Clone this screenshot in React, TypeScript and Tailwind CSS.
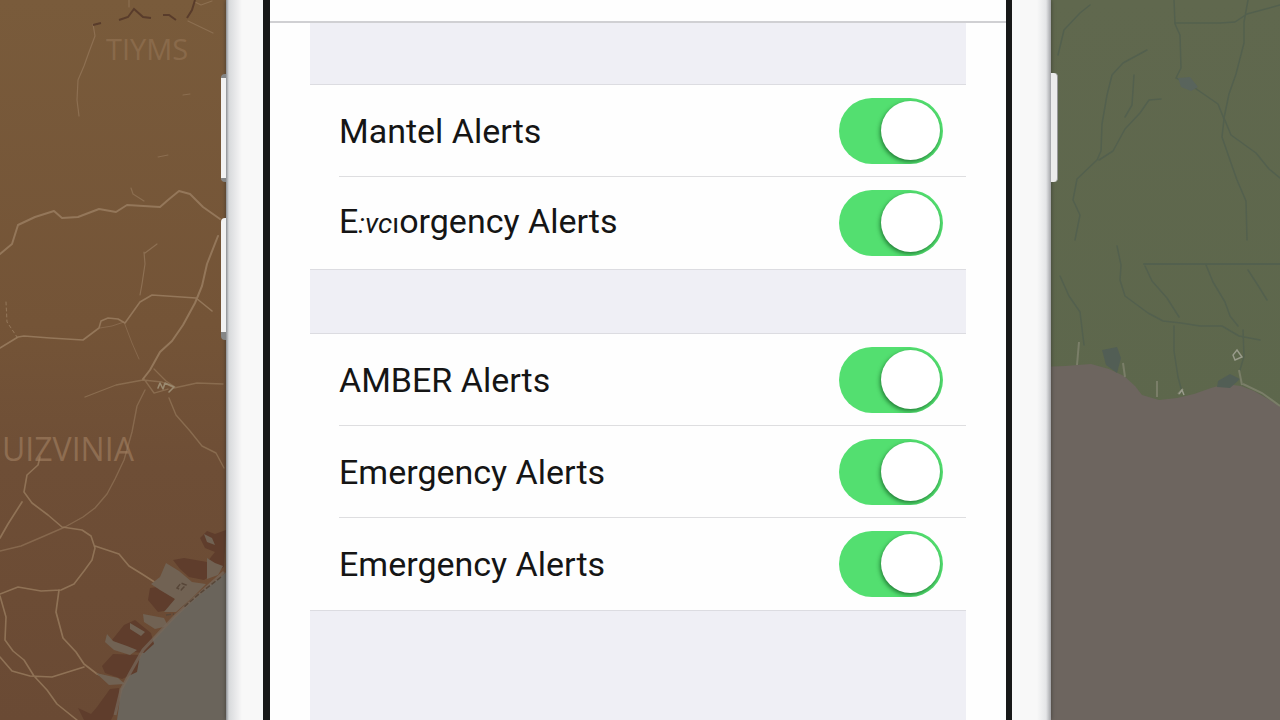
import { type ReactNode } from 'react';

type Alert = { id: string; label: string; text?: ReactNode };

const governmentAlerts: Alert[] = [
  { id: 'mantel', label: 'Mantel Alerts' },
  {
    id: 'emergency-1',
    label: 'E:vcıorgency Alerts',
    text: (
      <>
        E<span className="text-[28px] italic">:vc</span>
        <span className="text-[28px]">ı</span>orgency Alerts
      </>
    ),
  },
];

const publicAlerts: Alert[] = [
  { id: 'amber', label: 'AMBER Alerts' },
  { id: 'emergency-2', label: 'Emergency Alerts' },
  { id: 'emergency-3', label: 'Emergency Alerts' },
];

function MapBackground() {
  return (
    <svg
      className="absolute inset-0 h-full w-full"
      viewBox="0 0 1280 720"
      preserveAspectRatio="xMidYMid slice"
      aria-hidden="true"
    >
      <defs>
        <linearGradient id="land" x1="0" y1="0" x2="0" y2="1">
          <stop offset="0" stopColor="#795b3b" />
          <stop offset="0.45" stopColor="#745437" />
          <stop offset="0.65" stopColor="#6e4e36" />
          <stop offset="1" stopColor="#6a4a34" />
        </linearGradient>
        <linearGradient id="forest" x1="0" y1="0" x2="0" y2="1">
          <stop offset="0" stopColor="#60684e" />
          <stop offset="1" stopColor="#5d674c" />
        </linearGradient>
      </defs>
      <rect width="640" height="720" fill="url(#land)" />
      <rect x="640" width="640" height="420" fill="url(#forest)" />

      {/* western roads */}
      <g fill="none" stroke="#94775a" strokeWidth="1.6" strokeLinejoin="round" strokeLinecap="round">
        <path d="M0 254 L12 244 L18 225 L35 217 L54 211 L62 218 L78 217 L99 209 L116 212 L127 205 L160 207 L168 200 L179 191 L190 194 L203 207 L220 219" strokeWidth="2" />
        <path d="M93 24 L95 36 L89 52 L84 66 L78 80 L77 100 L79 116" strokeWidth="1.2" opacity=".75" />
        <path d="M131 188 L133 194 L144 201 M188 21 L213 33 M129 0 L129 7 M183 95 L190 94 M158 157 L168 155 M195 2 L201 5 L212 1" strokeWidth="1.2" opacity=".7" />
        <path d="M218 236 L207 264 L202 286 L195 303 L183 325 L172 341 L160 352 L150 370 L143 379" strokeWidth="2" />
        <path d="M0 348 L18 337 L24 336 L50 338 L83 340 L99 328 L101 321 L108 318 L118 319 L125 323 L140 302 L152 295 L196 298 L212 311" strokeWidth="1.6" />
        <path d="M100 328 L112 326 L124 322 L132 343 L139 359" strokeWidth="1" opacity=".6" />
        <path d="M144 252 L145 264 L142 284 L140 295 M145 253 L157 244" strokeWidth="1.2" opacity=".8" />
        <path d="M6 302 L7 322 L17 337" strokeWidth="1" strokeDasharray="3 3" />
        <path d="M85 397 L116 385 L143 380 L162 382 L174 388 L197 383 L223 384 M144 379 L154 393 L168 389 M154 369 L166 381 L175 387" strokeWidth="1.3" opacity=".7" />
        <path d="M158 388 L160 383 L163 389 L165 383 L174 387 L169 392" stroke="#9b8a70" strokeWidth="1.6" />
        <path d="M145 390 L137 406 L132 432 L124 460 L115 479 L107 494 L95 508 L83 517 L65 527 L42 537 L21 546 L0 551" strokeWidth="1.4" opacity=".65" />
        <path d="M169 398 L176 415 L190 431 L202 446 L216 453 L224 468" strokeWidth="1.4" opacity=".7" />
        <path d="M40 457 L38 465 L27 475 L24 492 L32 503 L48 515 L62 527 L82 530 L91 536 L95 548 L92 560 L84 571 L74 584 L61 590 L41 591 L18 587 L0 594" strokeWidth="1.6" opacity=".9" />
        <path d="M22 502 L8 524 L0 538 M95 546 L119 554 L129 566 L142 574 L156 583 L174 589" strokeWidth="1.7" opacity=".9" />
        <path d="M59 590 L56 612 L63 638 L76 652 L84 664 L97 674 L113 680" strokeWidth="1.7" opacity=".9" />
        <path d="M0 596 L6 617 L5 640 L13 651 L24 660 L34 676 L47 690 L57 704 L77 720 M0 657 L12 671 L30 676 L52 677 L84 667" strokeWidth="1.6" opacity=".9" />
      </g>
      <path d="M93 25 L101 23 M119 20 L128 17 L134 9 L143 17 L151 18 M163 15 L169 15 L176 20 M187 18 L192 10 L195 0" fill="none" stroke="#593c2b" strokeWidth="2" />
      <g fill="#a48264" fontFamily="Open Sans, sans-serif">
        <text x="106" y="60" fontSize="29" opacity=".4">TIYMS</text>
        <text x="2" y="461" fontSize="32" opacity=".6">UIZVINIA</text>
      </g>

      {/* western coast */}
      <path d="M240 560 L224 574 L207 587 L189 603 L174 617 L158 634 L147 645 L140 657 L129 676 L121 689 L119 706 L117 720 H280 V560Z" fill="#6a645b" />
      <path d="M226 530 L215 534 L207 531 L200 538 L205 548 L215 552 L207 562 L184 558 L173 560 L180 569 L189 577 L204 580 L224 567Z M150 588 L165 586 L175 599 L169 610 L158 612 L148 600Z M112 640 L124 625 L135 620 L151 633 L154 644 L144 653 L124 651Z M102 666 L113 654 L140 655 L137 672 L122 679 L105 673Z M78 708 L91 714 L97 707 L110 689 L119 688 L119 704 L111 720 H84Z" fill="#5f3d2c" />
      <path d="M166 563 L179 571 L192 582 L206 584 L192 598 L176 612 L164 612 L175 599 L160 590 L151 584 L160 577Z M107 634 L113 641 L127 646 L137 650 L130 655 L114 650 L105 642Z M130 623 L145 632 L141 636 L130 629Z M143 614 L164 618 L168 626 L155 629 L144 622Z M96 673 L118 678 L125 684 L109 685Z M204 534 L212 538 L215 545 L207 542Z M207 558 L215 563 L223 566 L218 575 L207 579Z" fill="#716253" />
      <path d="M224 572 L207 587 L189 603 L174 617 L158 634 L143 650 L130 673 L121 690 L115 715" fill="none" stroke="#75675a" strokeWidth="3" opacity=".75" />
      <path d="M221 577 L199 594 L184 607 M177 588 L181 583 L186 585 L181 590Z M166 615 L174 614" fill="none" stroke="#574638" strokeWidth="1.5" strokeDasharray="5 2" />

      {/* eastern waterways */}
      <g fill="none" stroke="#53604e" strokeWidth="1.5" strokeLinejoin="round" strokeLinecap="round">
        <path d="M1174 0 L1175 24 L1180 35 L1181 68 L1176 78 L1189 84 L1205 95 L1218 104 L1224 119 L1222 137 L1231 163 L1237 180 L1246 201 L1247 240" />
        <path d="M1175 23 H1220 L1235 22 L1247 14 L1280 5 M1248 0 L1244 22 L1244 43 L1236 74 L1229 94 L1224 118 L1231 135 L1256 153 L1269 169 L1280 178" />
        <path d="M1147 50 L1123 63 L1112 75 L1107 95 L1102 124 L1101 151 L1097 160 L1077 179 L1073 200 L1080 215 L1075 240" />
        <path d="M1134 75 L1132 105 L1125 117 M1161 99 L1149 100 L1140 113 L1125 129 L1113 151 L1099 160" />
        <path d="M1090 5 L1080 13 L1064 30 L1058 55 M1117 246 L1121 265 L1120 280 L1125 296 L1148 313 L1163 321 L1181 323 L1200 326 L1222 326 L1239 336 L1260 340" />
        <path d="M1144 264 H1280" strokeWidth="2" />
        <path d="M1145 266 L1152 281 L1167 298 L1179 317 M1206 265 L1213 282 L1225 302 L1230 316 L1238 326 M1248 270 L1259 287 L1267 300" />
        <path d="M1060 276 L1069 296 L1080 312 L1084 345 M1174 326 L1174 351 L1178 377 L1182 392 M1243 330 L1244 356 L1240 370" />
      </g>
      <path d="M1178 78 L1190 77 L1198 87 L1191 91 L1181 87Z" fill="#59645c" />
      <path d="M1040 367 L1065 366 L1091 364 L1109 369 L1124 376 L1135 386 L1142 395 L1159 400 L1177 398 L1194 394 L1211 388 L1225 384 L1241 386 L1254 391 L1268 399 L1280 406 V720 H1040Z" fill="#6d655f" />
      <path d="M1102 350 L1117 347 L1121 358 L1117 373 L1106 365Z M1218 381 L1230 374 L1240 379 L1230 388 L1217 387Z" fill="#525e55" />
      <path d="M1079 342 L1077 365 M1123 363 L1125 377 M1157 381 V397 M1178 394 L1183 389 M1243 384 L1262 393 L1280 406 M1239 370 L1242 385" fill="none" stroke="#7a7e68" strokeWidth="2" />
      <path d="M1237 350 L1242 357 L1235 360 L1233 355Z M1179 394 L1182 390 L1184 395" fill="none" stroke="#9a9c8c" strokeWidth="1.4" />
    </svg>
  );
}

function AlertRow({ alert }: { alert: Alert }) {
  return (
    <li className="group flex h-[92px] pl-[29px]">
      <div className="flex flex-1 items-center justify-between border-b border-[#dedee0] pr-[23px] group-last:border-transparent">
        <label htmlFor={alert.id} className="text-[34px] leading-10 text-[#151515]">
          {alert.text ?? alert.label}
        </label>
        <input
          id={alert.id}
          type="checkbox"
          role="switch"
          aria-label={alert.label}
          defaultChecked
          className="flex h-[66px] w-[104px] shrink-0 cursor-pointer appearance-none items-center overflow-hidden rounded-full bg-[#e4e4e6] p-[3px] before:size-[59px] before:rounded-full before:bg-white before:shadow-[-1px_2px_4px_rgba(0,60,15,0.6)] checked:justify-end checked:bg-[#53df70]"
        />
      </div>
    </li>
  );
}

function AlertGroup({ alerts, name }: { alerts: Alert[]; name: string }) {
  return (
    <ul aria-label={name} className="bg-[#fefefe] shadow-[0_-1px_0_#dcdce1,0_1px_0_#dcdce1]">
      {alerts.map((alert) => (
        <AlertRow key={alert.id} alert={alert} />
      ))}
    </ul>
  );
}

export default function App() {
  return (
    <div className="relative grid min-h-screen grid-cols-[226fr_minmax(0,825px)_229fr] overflow-hidden bg-[#6e4e36] font-['Roboto','Liberation_Sans',sans-serif]">
      <MapBackground />
      <div className="relative col-start-2 flex bg-[linear-gradient(90deg,#8d9094_0px,#d8dadc_3px,#eeeeef_12px,#f8f8f8_16px,#f8f8f8_calc(100%_-_14px),#e4e5e7_calc(100%_-_5px),#a2a3a7_100%)] px-[37px] pr-[39px] shadow-[0_0_4px_rgba(45,43,40,0.7)]">
        <span className="absolute top-[74px] -left-[5px] h-[108px] w-[5px] rounded-l-sm border-y-4 border-[#858686] bg-[#f2f2f2]" />
        <span className="absolute top-[218px] -left-[5px] h-[122px] w-[5px] rounded-l-sm border-b-8 border-[#858686] bg-[#f2f2f2]" />
        <span className="absolute top-[73px] -right-[7px] h-[109px] w-[7px] rounded-r-sm border-r border-[#999999] bg-[#ececec]" />
        <main className="flex flex-1 flex-col border-r-6 border-l-7 border-[#171818] bg-[#fefefe]">
          <header className="h-[23px] border-b-2 border-[#d0d0d3]" />
          <div className="mr-10 ml-10 flex flex-1 flex-col bg-[#efeff5]">
            <div className="h-[62px]" />
            <AlertGroup alerts={governmentAlerts} name="Government alerts" />
            <div className="h-[65px]" />
            <AlertGroup alerts={publicAlerts} name="Public safety alerts" />
          </div>
        </main>
      </div>
    </div>
  );
}
